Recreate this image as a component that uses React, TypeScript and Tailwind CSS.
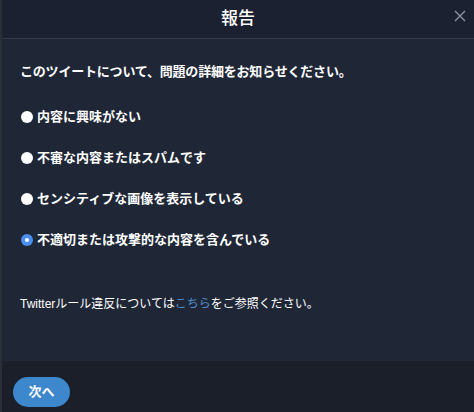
import React, { useState } from 'react';

const reasons = [
  '内容に興味がない',
  '不審な内容またはスパムです',
  'センシティブな画像を表示している',
  '不適切または攻撃的な内容を含んでいる',
];

const font = { fontFamily: '"Liberation Sans", "Noto Sans CJK JP", sans-serif' };

export default function App() {
  const [selected, setSelected] = useState(3);

  return (
    <div className="flex h-[412px] w-[474px] overflow-hidden bg-[#262a31]" style={font}>
      <div className="w-[2px] shrink-0 bg-[#2a2e35]" />
      <div className="flex flex-1 flex-col">
        <header className="relative flex h-[39px] shrink-0 items-center justify-center border-b border-[#323a49] bg-[#1b2130]">
          <h1 className="text-[17px] font-medium text-white">報告</h1>
          <button className="absolute right-[6px] top-[8px] flex h-[16px] w-[16px] items-center justify-center text-[#8a93a3]">
            <svg width="12" height="12" viewBox="0 0 12 12" fill="none" stroke="currentColor" strokeWidth="1.4">
              <path d="M1 1L11 11M11 1L1 11" />
            </svg>
          </button>
        </header>

        <main className="flex flex-1 flex-col bg-[#1f2737] px-[18px] pt-[25px]">
          <p className="text-[13px] font-bold leading-[16px] tracking-[-0.2px] text-white">
            このツイートについて、問題の詳細をお知らせください。
          </p>
          <ul className="mt-[29px] flex flex-col gap-[25px]">
            {reasons.map((r, i) => (
              <li key={r}>
                <label className="flex cursor-pointer items-center gap-[4px]" onClick={() => setSelected(i)}>
                  {selected === i ? (
                    <span className="ml-[1px] flex h-[12px] w-[12px] items-center justify-center rounded-full bg-[#4a8ef0]">
                      <span className="h-[4px] w-[4px] rounded-full bg-white" />
                    </span>
                  ) : (
                    <span className="ml-[1px] h-[12px] w-[12px] rounded-full bg-white" />
                  )}
                  <span className="text-[13px] font-bold leading-[16px] text-white">{r}</span>
                </label>
              </li>
            ))}
          </ul>
          <p className="mt-[48px] text-[12px] leading-[16px] text-white">
            Twitterルール違反については<a className="text-[#4f8ccb]">こちら</a>をご参照ください。
          </p>
        </main>

        <footer className="flex h-[51px] shrink-0 items-start bg-[#1a1f2a] pl-[11px] pt-[16px]">
          <button className="h-[30px] w-[57px] rounded-full bg-[#3d88cc] text-[13px] font-bold text-white">
            次へ
          </button>
        </footer>
      </div>
    </div>
  );
}
